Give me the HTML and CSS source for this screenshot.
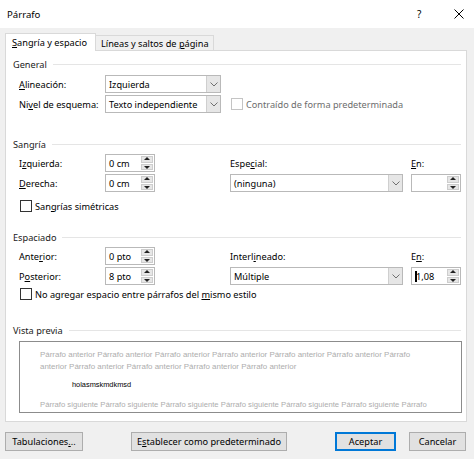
FILE: index.html
```html
<!DOCTYPE html>
<html lang="es">
<head>
<meta charset="utf-8">
<title>Párrafo</title>
<link rel="stylesheet" href="styles.css">
</head>
<body>
<div class="dialog">
  <div class="titlebar">
    <span class="title">Párrafo</span>
    <span class="help">?</span>
    <span class="close"><svg width="10" height="10" viewBox="0 0 10 10"><path d="M0.5 0.5 L9.5 9.5 M9.5 0.5 L0.5 9.5" stroke="#000" stroke-width="1" fill="none"/></svg></span>
  </div>

  <div class="tabs">
    <div class="tab active"><span><u>S</u>angría y espacio</span></div>
    <div class="tab inactive"><span>Líneas y saltos de <u>p</u>ágina</span></div>
  </div>

  <div class="panel">
    <div class="group-title g-general"><span>General</span></div>
    <div class="grid-general">
      <div class="lbl"><span><u>A</u>lineación:</span></div>
      <div class="select"><span class="val">Izquierda</span><span class="drop"><svg width="8" height="5" viewBox="0 0 8 5"><polyline points="0.5,0.5 4,4 7.5,0.5" stroke="#707070" fill="none"/></svg></span></div>
      <div></div>
      <div></div>
      <div class="lbl"><span>Ni<u>v</u>el de esquema:</span></div>
      <div class="select"><span class="val">Texto independiente</span><span class="drop"><svg width="8" height="5" viewBox="0 0 8 5"><polyline points="0.5,0.5 4,4 7.5,0.5" stroke="#707070" fill="none"/></svg></span></div>
      <div></div>
      <div class="check disabled"><span class="box"></span><span>Contraído de forma predeterminada</span></div>
    </div>

    <div class="group-title g-sangria"><span>Sangría</span></div>
    <div class="grid-fields">
      <div class="lbl"><span>I<u>z</u>quierda:</span></div>
      <div class="spin"><span class="val">0 cm</span><span class="arrows"><span class="up"></span><span class="down"></span></span></div>
      <div></div>
      <div class="lbl"><span>Espe<u>c</u>ial:</span></div>
      <div></div>
      <div class="lbl"><span><u>E</u>n:</span></div>

      <div class="lbl"><span><u>D</u>erecha:</span></div>
      <div class="spin"><span class="val">0 cm</span><span class="arrows"><span class="up"></span><span class="down"></span></span></div>
      <div></div>
      <div class="select"><span class="val">(ninguna)</span><span class="drop"><svg width="8" height="5" viewBox="0 0 8 5"><polyline points="0.5,0.5 4,4 7.5,0.5" stroke="#707070" fill="none"/></svg></span></div>
      <div></div>
      <div class="spin"><span class="val"></span><span class="arrows"><span class="up"></span><span class="down"></span></span></div>
    </div>
    <div class="check c-sim"><span class="box"></span><span>San<u>g</u>rías simétricas</span></div>

    <div class="group-title g-espaciado"><span>Espaciado</span></div>
    <div class="grid-fields">
      <div class="lbl"><span>Ante<u>r</u>ior:</span></div>
      <div class="spin"><span class="val">0 pto</span><span class="arrows"><span class="up"></span><span class="down"></span></span></div>
      <div></div>
      <div class="lbl"><span>Interl<u>i</u>neado:</span></div>
      <div></div>
      <div class="lbl"><span>E<u>n</u>:</span></div>

      <div class="lbl"><span>P<u>o</u>sterior:</span></div>
      <div class="spin"><span class="val">8 pto</span><span class="arrows"><span class="up"></span><span class="down"></span></span></div>
      <div></div>
      <div class="select"><span class="val">Múltiple</span><span class="drop"><svg width="8" height="5" viewBox="0 0 8 5"><polyline points="0.5,0.5 4,4 7.5,0.5" stroke="#707070" fill="none"/></svg></span></div>
      <div></div>
      <div class="spin"><span class="val"><span class="caret"></span>1,08</span><span class="arrows"><span class="up"></span><span class="down"></span></span></div>
    </div>
    <div class="check c-noadd"><span class="box"></span><span>No agregar espacio entre párrafos del <u>m</u>ismo estilo</span></div>

    <div class="group-title g-vista"><span>Vista previa</span></div>
    <div class="preview">
      <div class="pv-line">Párrafo anterior Párrafo anterior Párrafo anterior Párrafo anterior Párrafo anterior Párrafo anterior Párrafo</div>
      <div class="pv-line">anterior Párrafo anterior Párrafo anterior Párrafo anterior Párrafo anterior</div>
      <div class="pv-main">holasmskmdkmsd</div>
      <div class="pv-line pv-next">Párrafo siguiente Párrafo siguiente Párrafo siguiente Párrafo siguiente Párrafo siguiente Párrafo siguiente Párrafo</div>
    </div>
  </div>

  <div class="buttons">
    <div class="btn b-tab"><span>Tabulaciones<u>.</u>..</span></div>
    <div class="btn b-def"><span>E<u>s</u>tablecer como predeterminado</span></div>
    <div class="btn b-ok"><span>Aceptar</span></div>
    <div class="btn b-cancel"><span>Cancelar</span></div>
  </div>
</div>
</body>
</html>
```

FILE: styles.css
```css
* { box-sizing: border-box; }
html, body { margin: 0; padding: 0; }
body {
  width: 474px;
  height: 459px;
  overflow: hidden;
  background: #f0f0f0;
  font-family: "Noto Sans", "Open Sans", sans-serif;
  font-size: 9.2px;
  color: #000;
}
u { text-decoration: underline; text-underline-offset: 1px; }

.dialog { width: 474px; height: 459px; }

.titlebar {
  height: 28px;
  background: #fff;
  display: flex;
  align-items: center;
  padding-left: 7px;
  font-size: 9.6px;
}
.title { flex: 1; }
.help { width: 37px; font-size: 10px; }
.close { width: 20px; display: flex; align-items: center; }

.tabs {
  height: 17px;
  margin-top: 5px;
  padding-left: 5px;
  display: flex;
  align-items: flex-end;
}
.tab {
  display: flex;
  align-items: center;
  white-space: nowrap;
  border: 1px solid #d9d9d9;
  border-bottom: none;
}
.tab.active {
  width: 91px;
  height: 18px;
  margin-bottom: -1px;
  padding-left: 6px;
  background: #fff;
  position: relative;
  z-index: 1;
}
.tab.inactive {
  width: 118px;
  height: 15px;
  padding-left: 5px;
  border-left: none;
  background: #f0f0f0;
}

.panel {
  margin-left: 5px;
  width: 462px;
  height: 372px;
  background: #fff;
  border: 1px solid #d9d9d9;
  padding: 0 5px 0 6px;
}

.group-title {
  height: 14px;
  display: flex;
  align-items: center;
  padding-left: 1px;
  color: #1a1a1a;
}
.group-title::after {
  content: "";
  flex: 1;
  height: 1px;
  background: #e5e5e5;
  margin-left: 6px;
}
.g-general { margin-top: 6px; }
.g-sangria { margin-top: 24px; }
.g-espaciado { margin-top: 17px; }
.g-vista { margin-top: 22px; }

.lbl { display: flex; align-items: center; white-space: nowrap; }

.grid-general {
  margin-top: 4px;
  margin-left: 7px;
  display: grid;
  grid-template-columns: 86px 116px 10px auto;
  grid-auto-rows: 18px;
  row-gap: 2px;
}
.grid-fields {
  margin-top: 3px;
  margin-left: 7px;
  display: grid;
  grid-template-columns: 86px 50px 75px 173px 8px 50px;
  grid-auto-rows: 18px;
  row-gap: 2px;
}

.select, .spin {
  display: flex;
  align-items: stretch;
  background: #fff;
  border: 1px solid #b9b9b9;
}
.val {
  flex: 1;
  display: flex;
  align-items: center;
  padding-left: 3px;
  white-space: nowrap;
  overflow: hidden;
}
.drop {
  width: 14px;
  background: #e6e6e6;
  border-left: 1px solid #cfcfcf;
  display: flex;
  align-items: center;
  justify-content: center;
}
.arrows {
  width: 13px;
  display: flex;
  flex-direction: column;
  padding: 1px 1px 1px 0;
  gap: 1px;
}
.arrows span {
  flex: 1;
  background: #e6e6e6;
  border: 1px solid #cdcdcd;
  position: relative;
}
.arrows .up::after, .arrows .down::after {
  content: "";
  position: absolute;
  left: 50%;
  top: 50%;
  width: 0;
  height: 0;
  margin-left: -3px;
  border-left: 3px solid transparent;
  border-right: 3px solid transparent;
}
.arrows .up::after { border-bottom: 3px solid #222; margin-top: -2px; }
.arrows .down::after { border-top: 3px solid #222; margin-top: -1px; }
.caret {
  display: inline-block;
  width: 2px;
  height: 11px;
  background: #000;
  margin-right: -1px;
}

.check {
  display: flex;
  align-items: center;
  white-space: nowrap;
}
.check .box {
  width: 12px;
  height: 12px;
  border: 1px solid #333;
  background: #fff;
  margin-right: 3px;
  flex: none;
}
.check.disabled { color: #6d6d6d; }
.check.disabled .box { border-color: #c4c4c4; }
.c-sim { margin-top: 7px; margin-left: 8px; height: 14px; }
.c-noadd { margin-top: 2px; margin-left: 8px; height: 14px; }

.preview {
  margin-top: 4px;
  margin-left: 7px;
  width: 443px;
  height: 72px;
  border: 1px solid #8c8c8c;
  background: #fff;
  padding: 7px 0 0 20px;
  overflow: hidden;
  font-family: "Liberation Sans", sans-serif;
}
.pv-line {
  height: 12px;
  line-height: 12px;
  font-size: 7.95px;
  color: #adadad;
  white-space: nowrap;
}
.pv-main {
  margin-top: 6px;
  margin-left: 32px;
  height: 12px;
  line-height: 12px;
  font-size: 7.4px;
  color: #000;
}
.pv-line.pv-next { margin-top: 8px; font-size: 7.7px; }

.buttons {
  margin-top: 10px;
  padding-left: 5px;
  display: flex;
}
.btn {
  height: 19px;
  display: flex;
  align-items: center;
  justify-content: center;
  background: #e1e1e1;
  border: 1px solid #adadad;
  white-space: nowrap;
}
.b-tab { width: 78px; }
.b-def { width: 156px; margin-left: 48px; }
.b-ok { width: 61px; margin-left: 48px; border-color: #0078d7; box-shadow: inset 0 0 0 1px #0078d7; }
.b-cancel { width: 57px; margin-left: 13px; }
```
